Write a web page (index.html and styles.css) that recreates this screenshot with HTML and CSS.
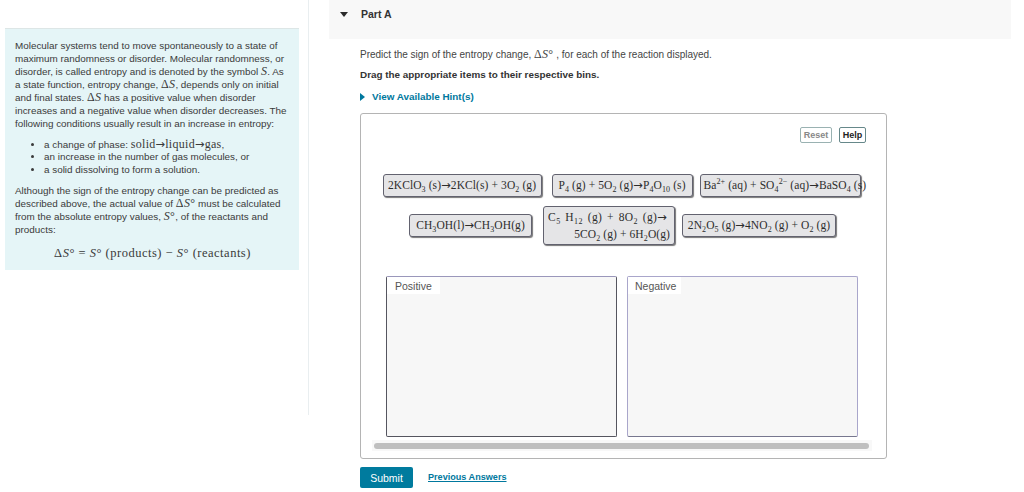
FILE: index.html
```html
<!DOCTYPE html>
<html lang="en">
<head>
<meta charset="utf-8">
<title>Part A</title>
<link rel="stylesheet" href="styles.css">
</head>
<body>
<div class="page">
  <aside class="side">
    <section class="intro">
      <p class="para">Molecular systems tend to move spontaneously to a state of maximum randomness or disorder. Molecular randomness, or disorder, is called entropy and is denoted by the symbol <span class="m"><i>S</i></span>. As a state function, entropy change, <span class="m">Δ<i>S</i></span>, depends only on initial and final states. <span class="m">Δ<i>S</i></span> has a positive value when disorder increases and a negative value when disorder decreases. The following conditions usually result in an increase in entropy:</p>
      <ul class="list">
        <li>a change of phase: <span class="m">solid<span class="ar">→</span>liquid<span class="ar">→</span>gas</span>,</li>
        <li>an increase in the number of gas molecules, or</li>
        <li>a solid dissolving to form a solution.</li>
      </ul>
      <p class="para">Although the sign of the entropy change can be predicted as described above, the actual value of <span class="m">Δ<i>S</i>°</span> must be calculated from the absolute entropy values, <span class="m"><i>S</i>°</span>, of the reactants and products:</p>
      <p class="formula">Δ<i>S</i>° = <i>S</i>° (products) − <i>S</i>° (reactants)</p>
    </section>
  </aside>
  <main class="main">
    <header class="part-head">
      <svg class="caret-down" width="8" height="5" viewBox="0 0 8 5"><path d="M0 0h8L4 5z" fill="#2b2b2b"/></svg>
      <h2 class="part-title">Part A</h2>
    </header>
    <div class="content">
      <p class="prompt">Predict the sign of the entropy change, <span class="m">Δ<i>S</i>°</span> , for each of the reaction displayed.</p>
      <p class="instr">Drag the appropriate items to their respective bins.</p>
      <a class="hint"><svg class="caret-right" width="5" height="8" viewBox="0 0 5 8"><path d="M0 0l5 4-5 4z" fill="#00789e"/></svg>View Available Hint(s)</a>
      <section class="stage">
        <div class="tools">
          <button class="tool reset">Reset</button>
          <button class="tool help">Help</button>
        </div>
        <div class="chips first">
          <div class="chip w1">2KClO<sub>3</sub> (s)<span class="ar">→</span>2KCl(s) + 3O<sub>2</sub> (g)</div>
          <div class="chip w2">P<sub>4</sub> (g) + 5O<sub>2</sub> (g)<span class="ar">→</span>P<sub>4</sub>O<sub>10</sub> (s)</div>
          <div class="chip w3">Ba<sup>2+</sup> (aq) + SO<sub>4</sub><sup>2−</sup> (aq)<span class="ar">→</span>BaSO<sub>4</sub> (s)</div>
        </div>
        <div class="chips second">
          <div class="chip w4">CH<sub>3</sub>OH(l)<span class="ar">→</span>CH<sub>3</sub>OH(g)</div>
          <div class="chip w5 tall"><span class="wide">C<sub>5</sub> H<sub>12</sub> (g) + 8O<sub>2</sub> (g)<span class="ar">→</span></span><br>5CO<sub>2</sub> (g) + 6H<sub>2</sub>O(g)</div>
          <div class="chip w6">2N<sub>2</sub>O<sub>5</sub> (g)<span class="ar">→</span>4NO<sub>2</sub> (g) + O<sub>2</sub> (g)</div>
        </div>
        <div class="bins">
          <div class="bin pos"><span class="bin-label">Positive</span></div>
          <div class="bin neg"><span class="bin-label">Negative</span></div>
        </div>
        <div class="track"><div class="thumb"></div></div>
      </section>
      <div class="actions">
        <button class="submit">Submit</button>
        <a class="prev">Previous Answers</a>
      </div>
    </div>
  </main>
</div>
</body>
</html>
```
FILE: styles.css
```css
* { box-sizing: border-box; }
html, body { margin: 0; padding: 0; background: #fff; }
body { font-family: "Liberation Sans", Arial, sans-serif; color: #333; height: 492px; overflow: hidden; }
.page { display: flex; align-items: flex-start; }
.side { width: 309px; height: 415px; padding: 28px 9px 0 5px; border-right: 1px solid #e9eef0; flex: none; }
.intro { background: #e5f5f7; border-top: 1px solid #dde6e6; height: 242px; padding: 10px 10px 0 10px; font-size: 9.9px; line-height: 13px; color: #3a3a3a; }
.para { margin: 0; }
.m { font-family: "Liberation Serif", serif; font-size: 12px; letter-spacing: .3px; }
.ar { font-family: "DejaVu Sans", sans-serif; font-size: 11.5px; letter-spacing: 0; }
.list { margin: 8px 0 8px; padding: 0 0 0 29px; line-height: 12.400px; }
.formula { margin: 11px 0 0; text-align: center; font-family: "Liberation Serif", serif; font-size: 12.500px; letter-spacing: .5px; padding-left: 1px; }
.main { flex: 1; padding: 0 13px 0 20px; min-width: 0; }
.part-head { height: 39px; background: #f8f8f8; display: flex; align-items: flex-start; padding: 11px 0 0 11px; }
.caret-down { margin-top: 1px; flex: none; }
.part-title { margin: 0 0 0 13px; font-size: 10.5px; line-height: 7px; font-weight: 700; color: #333; }
.content { padding: 8px 0 0 31px; }
.prompt { margin: 0; font-size: 10px; line-height: 14px; color: #444; }
.instr { margin: 6px 0 0; font-size: 9.9px; line-height: 14px; font-weight: 700; color: #333; }
.hint { display: flex; align-items: center; margin-top: 9px; font-size: 9.9px; line-height: 12px; font-weight: 700; color: #00789e; }
.caret-right { margin-right: 7px; flex: none; }
.stage { width: 527px; height: 346px; margin-top: 10px; border: 1px solid #b4b4b4; border-radius: 3px; padding: 13px 11px 0; position: relative; }
.tools { display: flex; justify-content: flex-end; gap: 7px; padding-right: 9px; }
.tool { height: 16px; padding: 0; border: 1px solid #8aa; border-radius: 2px; background: #fff; font: 700 9px/13px "Liberation Sans", Arial, sans-serif; }
.reset { width: 32px; color: #888; border-color: #9ab2b2; }
.help { width: 27px; color: #222; border-color: #66888a; }
.chips { display: flex; justify-content: center; align-items: center; gap: 9px; }
.first { margin-top: 31px; padding-right: 4px; }
.second { margin-top: 9px; padding-right: 2px; }
.chip { height: 23px; border: 1px solid #62626f; border-radius: 3px; background: #e5e5e7; box-shadow: 1px 1px 1px #777; font-family: "Liberation Serif", serif; font-size: 11.5px; line-height: 21px; color: #2d2d2d; text-align: center; white-space: nowrap; letter-spacing: .1px; flex: none; }
.chip sub, .chip sup { font-size: 8px; line-height: 0; }
.w1 { width: 159px; }
.w2 { width: 141px; margin-left: 1px; }
.w3 { width: 161px; margin-left: -2px; text-align: left; padding-left: 3px; }
.w4 { width: 123px; }
.w5 { width: 132px; margin: 0 -2px 0 2px; }
.w6 { width: 154px; }
.tall { height: 39px; line-height: 17px; padding: 2px 4px 0 0; text-align: right; }
.wide { margin-right: 3px; letter-spacing: .4px; word-spacing: 1.5px; }
.bins { display: flex; gap: 10px; margin: 31px 0 0 14px; }
.bin { width: 231px; height: 161px; background: #f7f7f7; border: 1px solid #8d8da8; border-radius: 2px; }
.pos { border-left-color: #55555f; border-right-color: #55555f; border-bottom-color: #55555f; border-top-color: #9a97bb; }
.neg { border-color: #a9a6cb; border-bottom-color: #77778f; }
.neg .bin-label { padding-left: 7px; }
.bin-label { display: block; width: 53px; height: 17px; padding: 3px 0 0 8px; background: #fff; font-size: 10.500px; line-height: 12px; color: #555; }
.track { height: 11px; margin: 3px 3px 0 0; background: #f8f8f8; padding: 3px 3px 2px 2px; }
.thumb { height: 6px; background: #bfbfbf; border-radius: 3px; }
.actions { display: flex; align-items: center; margin-top: 8px; }
.submit { width: 53px; height: 21px; padding: 0; border: 0; border-radius: 2px; background: #007b9e; color: #fff; font: 10.500px "Liberation Sans", Arial, sans-serif; }
.prev { margin-left: 15px; margin-top: -1px; font-size: 9.1px; font-weight: 700; color: #00789e; text-decoration: underline; }
```
